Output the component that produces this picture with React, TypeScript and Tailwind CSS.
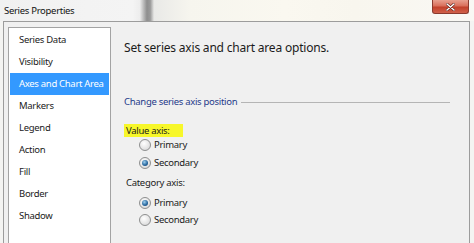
import React from "react";

const font = { fontFamily: '"Noto Sans", "Open Sans", sans-serif' };

function Radio({ checked, label }: { checked?: boolean; label: string }) {
  return (
    <div className="flex items-center h-full">
      <span className="ml-[15px] w-[12px] h-[12px] rounded-full border border-[#8e8f8f] bg-[radial-gradient(circle_at_40%_35%,#ffffff_0%,#e6e6e6_55%,#cfd0d2_100%)] flex items-center justify-center">
        {checked && (
          <span className="w-[6px] h-[6px] rounded-full bg-[radial-gradient(circle_at_40%_35%,#9fd0ef_0%,#2a6aa1_55%,#0e3a66_100%)]" />
        )}
      </span>
      <span className="ml-[3px] text-[9.5px] tracking-[-0.3px] leading-none text-[#1b1b1b]">
        {label}
      </span>
    </div>
  );
}

const items = [
  "Series Data",
  "Visibility",
  "Axes and Chart Area",
  "Markers",
  "Legend",
  "Action",
  "Fill",
  "Border",
  "Shadow",
];

export default function App() {
  return (
    <div
      className="w-[474px] h-[243px] overflow-hidden bg-[#f4f4f2] flex flex-col"
      style={font}
    >
      {/* title bar */}
      <div className="h-[21px] shrink-0 flex items-start bg-[linear-gradient(90deg,#f1f1f1_0%,#f4f4f4_28%,#ededed_29.5%,#8e8e8e_31%,#9a9a9a_31.7%,#e9e9e7_32.5%,#f6f5ee_40%,#faf8f0_60%,#f8f6ee_75%,#f9f8f4_100%)]">
        <span className="ml-[4px] mt-[3px] text-[9.5px] tracking-[-0.3px] leading-[16px] text-[#111]">
          Series Properties
        </span>
        <div className="ml-auto mr-[5px] w-[37px] h-[14px] rounded-b-[3px] border border-t-0 border-[#8a3a2e] bg-[linear-gradient(180deg,#e8a08f_0%,#d9705c_45%,#c2412b_55%,#d0604a_100%)] flex items-center justify-center">
          <svg width="9" height="8" viewBox="0 0 9 8">
            <path d="M1 1 L8 7 M8 1 L1 7" stroke="#5a1a12" strokeWidth="2.6" strokeLinecap="round" />
            <path d="M1 1 L8 7 M8 1 L1 7" stroke="#ffffff" strokeWidth="1.5" strokeLinecap="round" />
          </svg>
        </div>
      </div>

      {/* dialog body */}
      <div className="flex-1 flex pr-[4px]">
        <div className="ml-[3px] flex-1 border-t border-l border-r border-[#9c9c9c] bg-[#f0f0f0] flex">
          {/* left list */}
          <div className="ml-[4px] mt-[5px] w-[103px] border-t border-l border-r border-[#a3a3a3] bg-white pt-[1px] px-[1px]">
            {items.map((it) => (
              <div
                key={it}
                className={
                  "h-[22px] flex items-center pl-[9px] text-[9.5px] tracking-[-0.3px] leading-none " +
                  (it === "Axes and Chart Area"
                    ? "bg-[#3399ff] text-white"
                    : "text-[#1b1b1b]")
                }
              >
                {it}
              </div>
            ))}
          </div>

          {/* right pane */}
          <div className="flex-1 flex flex-col pl-[13px] pt-[16px]">
            <div className="h-[20px] text-[12px] tracking-[-0.2px] leading-[20px] text-[#1b1b1b]">
              Set series axis and chart area options.
            </div>
            <div className="mt-[36px] h-[16px] flex items-center mr-[19px]">
              <span className="text-[9.5px] tracking-[-0.3px] leading-none text-[#1f3a8a]">
                Change series axis position
              </span>
              <span className="ml-[4px] flex-1 h-px bg-[#b5b5b5]" />
            </div>
            <div className="mt-[14px] h-[13px] flex">
              <span className="w-[59px] bg-[#f7f72a] pl-[2px] text-[9.5px] tracking-[-0.3px] leading-[13px] text-[#1b1b1b]">
                Value axis:
              </span>
            </div>
            <div className="h-[16px]">
              <Radio label="Primary" />
            </div>
            <div className="h-[19px]">
              <Radio checked label="Secondary" />
            </div>
            <div className="h-[22px] flex items-center pl-[2px] text-[9.5px] tracking-[-0.3px] leading-none text-[#1b1b1b]">
              Category axis:
            </div>
            <div className="h-[17px]">
              <Radio checked label="Primary" />
            </div>
            <div className="h-[18px]">
              <Radio label="Secondary" />
            </div>
          </div>
        </div>
      </div>
    </div>
  );
}
